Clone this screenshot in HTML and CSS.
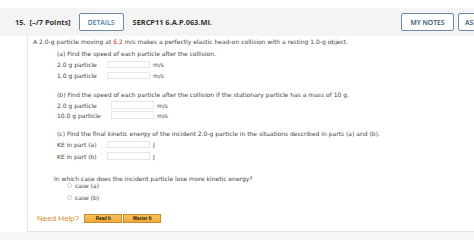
FILE: index.html
```html
<!DOCTYPE html>
<html>
<head>
<meta charset="utf-8">
<link rel="stylesheet" href="styles.css">
</head>
<body>
<div class="page">
  <div class="header">
    <span class="qnum">15.</span>
    <span class="points">[&ndash;/7 Points]</span>
    <span class="btn btn-details">DETAILS</span>
    <span class="code">SERCP11 6.A.P.063.MI.</span>
    <span class="spacer"></span>
    <span class="btn btn-notes">MY NOTES</span>
    <span class="btn btn-ask">ASK YOUR TEACHER</span>
  </div>
  <div class="content">
    <div class="intro">A 2.0-g particle moving at <span class="red">6.2</span> m/s makes a perfectly elastic head-on collision with a resting 1.0-g object.</div>
    <div class="part">
      <div class="ptitle pa">(a) Find the speed of each particle after the collision.</div>
      <div class="row r-a1"><span class="lbl w50">2.0 g particle</span><span class="inp"></span><span class="unit">m/s</span></div>
      <div class="row r-a2"><span class="lbl w50">1.0 g particle</span><span class="inp"></span><span class="unit">m/s</span></div>
    </div>
    <div class="part">
      <div class="ptitle pb">(b) Find the speed of each particle after the collision if the stationary particle has a mass of 10 g.</div>
      <div class="row r-b"><span class="lbl w54">2.0 g particle</span><span class="inp"></span><span class="unit">m/s</span></div>
      <div class="row r-b"><span class="lbl w54">10.0 g particle</span><span class="inp"></span><span class="unit">m/s</span></div>
    </div>
    <div class="part">
      <div class="ptitle pc">(c) Find the final kinetic energy of the incident 2.0-g particle in the situations described in parts (a) and (b).</div>
      <div class="row r-c1"><span class="lbl w50">KE in part (a)</span><span class="inp"></span><span class="unit">J</span></div>
      <div class="row r-c2"><span class="lbl w50">KE in part (b)</span><span class="inp"></span><span class="unit">J</span></div>
    </div>
    <div class="part">
      <div class="question">In which case does the incident particle lose more kinetic energy?</div>
      <div class="radio-row ra"><span class="radio"></span><span>case (a)</span></div>
      <div class="radio-row rb"><span class="radio"></span><span>case (b)</span></div>
    </div>
    <div class="help">
      <span class="need">Need Help?</span>
      <span class="hbtn">Read It</span>
      <span class="hbtn">Master It</span>
    </div>
  </div>
  <div class="footer"></div>
</div>
</body>
</html>
```
FILE: styles.css
```css
html, body {
  margin: 0;
  padding: 0;
  background: #ffffff;
  overflow: hidden;
}
.page {
  width: 560px;
  height: 240px;
  padding-top: 8px;
  box-sizing: border-box;
  overflow: hidden;
}
.header {
  height: 28px;
  background: #f4f4f4;
  display: flex;
  align-items: center;
  padding: 0 12px 0 15px;
  font-family: "Open Sans", sans-serif;
  font-weight: 700;
  font-size: 7.4px;
  color: #333333;
  white-space: nowrap;
  box-sizing: border-box;
}
.qnum { margin-right: 4px; }
.points { margin-right: 8px; }
.btn {
  display: flex;
  align-items: center;
  justify-content: center;
  height: 18px;
  box-sizing: border-box;
  border: 1px solid #6f8aa6;
  border-radius: 2px;
  background: #ffffff;
  font-size: 6.8px;
  font-weight: 600;
  flex: none;
}
.btn-details {
  width: 45px;
  color: #4a78a0;
  margin-right: 9px;
}
.code { color: #333333; }
.spacer { flex: 1; }
.btn-notes {
  width: 53px;
  color: #2f4f6f;
  margin-right: 4px;
}
.btn-ask {
  width: 90px;
  color: #2f4f6f;
  justify-content: flex-start;
  padding-left: 6px;
}
.content {
  margin-left: 27px;
  height: 196px;
  border-left: 1px solid #e4e4e4;
  border-bottom: 1px solid #e4e4e4;
  box-sizing: border-box;
  padding: 1px 0 0 5px;
  font-family: "DejaVu Sans", Verdana, sans-serif;
  font-size: 6px;
  color: #444444;
  white-space: nowrap;
}
.intro { height: 10px; line-height: 10px; }
.red { color: #cc1f1f; }
.part { padding-left: 24px; }
.ptitle { height: 10px; line-height: 10px; }
.pa { margin-top: 2px; }
.pb { margin-top: 9px; }
.pc { margin-top: 9px; }
.row {
  display: flex;
  align-items: center;
}
.r-a1, .r-a2 { height: 11px; }
.r-b { height: 10px; }
.r-c1 { height: 11px; }
.r-c2 { height: 12px; }
.lbl { flex: none; }
.w50 { width: 50px; }
.w54 { width: 54px; }
.inp {
  width: 43px;
  height: 7.5px;
  border: 1px solid #e6e6e6;
  box-sizing: border-box;
  background: #ffffff;
  margin-right: 3px;
}
.question {
  margin-top: 13px;
  height: 7px;
  line-height: 7px;
  margin-left: -3px;
}
.radio-row {
  display: flex;
  align-items: center;
  height: 7px;
  padding-left: 10px;
}
.rb { margin-top: 4.5px; }
.radio {
  width: 3px;
  height: 3px;
  border: 0.5px solid #cfcfcf;
  border-radius: 50%;
  margin-right: 3px;
}
.help {
  margin-top: 13px;
  margin-left: 4px;
  display: flex;
  align-items: center;
  height: 9px;
}
.need {
  font-family: "Liberation Sans", Arial, sans-serif;
  font-size: 8px;
  color: #dd8a30;
  margin-right: 5px;
}
.hbtn {
  width: 38px;
  height: 9px;
  box-sizing: border-box;
  background: linear-gradient(#f6c261, #eea93b);
  border: 1px solid #c98a2a;
  font-family: "Liberation Sans", Arial, sans-serif;
  font-weight: 700;
  font-size: 4.5px;
  color: #2a1a00;
  display: flex;
  align-items: center;
  justify-content: center;
  margin-right: 1px;
}
.footer {
  height: 20px;
  background: #f8f8f8;
}
```
